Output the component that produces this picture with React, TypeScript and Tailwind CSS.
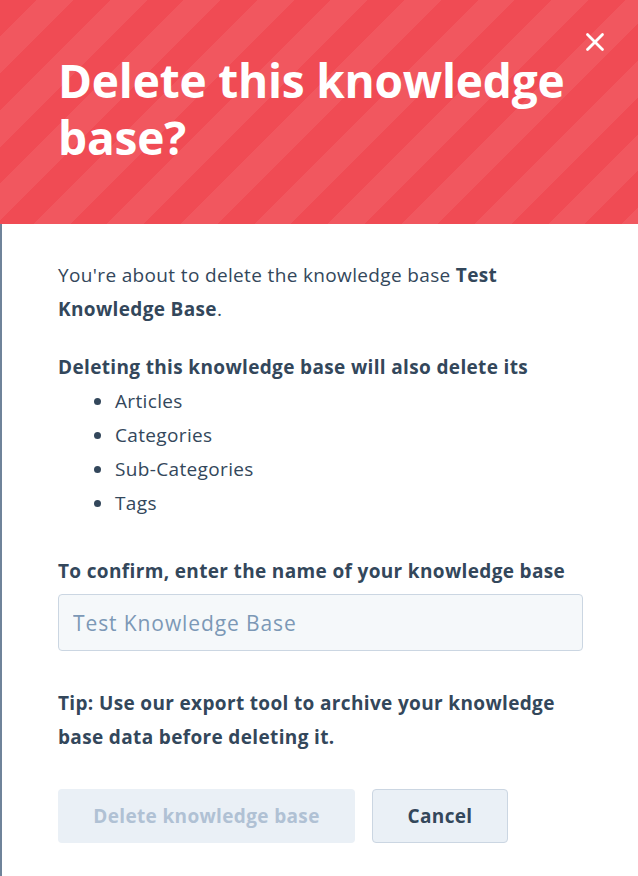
import { X } from 'lucide-react';

const bullets = ['Articles', 'Categories', 'Sub-Categories', 'Tags'];

export default function App() {
  return (
    <div className="min-h-screen w-[638px] bg-white font-['Open_Sans',sans-serif] text-[#33475b]">
      {/* Header */}
      <div className="relative h-[224px] bg-[repeating-linear-gradient(135deg,#f04b54_0px,#f04b54_26px,#f1575f_26px,#f1575f_52px)] pl-[58px] pr-[60px] pt-[52px]">
        <h1 className="text-[46px] font-bold leading-[57px] tracking-[-0.2px] text-white">
          Delete this knowledge base?
        </h1>
        <button className="absolute right-[28px] top-[27px] text-white">
          <X size={30} strokeWidth={2.2} />
        </button>
      </div>

      {/* Body */}
      <div className="border-l-2 border-[#6f839a] pb-[33px] pl-[56px] pr-[55px] pt-[34px] text-[19px] leading-[34px] tracking-[0.35px]">
        <p>
          You're about to delete the knowledge base <span className="font-bold">Test Knowledge Base</span>.
        </p>
        <p className="mt-[24px] font-bold">Deleting this knowledge base will also delete its</p>
        <ul className="list-disc pl-[56px]">
          {bullets.map((b) => (
            <li key={b} className="pl-[1px]">
              {b}
            </li>
          ))}
        </ul>

        <label className="mt-[34px] block font-bold">To confirm, enter the name of your knowledge base</label>
        <input
          type="text"
          placeholder="Test Knowledge Base"
          className="mt-[6px] h-[57px] w-full rounded-[4px] border border-[#cbd6e2] bg-[#f5f8fa] px-[14px] text-[21px] tracking-[0.9px] outline-none placeholder:text-[#7c98b6]"
        />

        <p className="mt-[35px] font-bold">
          Tip: Use our export tool to archive your knowledge base data before deleting it.
        </p>

        <div className="mt-[35px] flex gap-[17px]">
          <button className="h-[54px] w-[297px] rounded-[4px] bg-[#eaf0f6] font-bold text-[#b0c1d4]">
            Delete knowledge base
          </button>
          <button className="h-[54px] w-[136px] rounded-[4px] border border-[#cbd6e2] bg-[#eaf0f6] font-bold text-[#33475b]">
            Cancel
          </button>
        </div>
      </div>
    </div>
  );
}
